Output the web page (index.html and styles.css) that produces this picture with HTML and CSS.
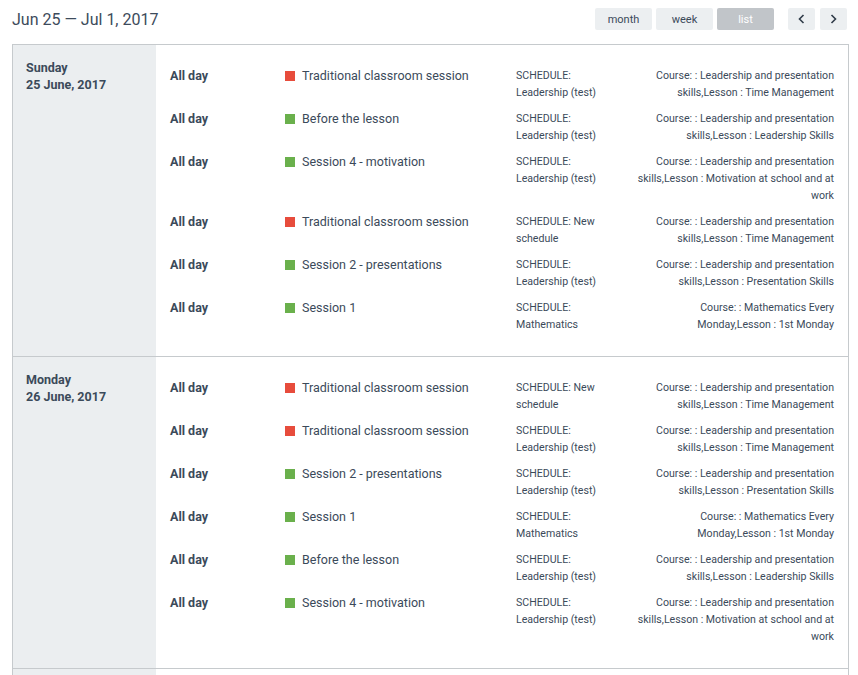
FILE: index.html
```html
<!DOCTYPE html>
<html lang="en">
<head>
    <meta charset="UTF-8">
    <title>Schedule - list</title>
    <link rel="stylesheet" href="styles.css">
</head>
<body>
    <div class="calendar">
        <div class="toolbar">
            <h2 class="range">Jun 25 — Jul 1, 2017</h2>
            <div class="views">
                <button class="view-btn">month</button>
                <button class="view-btn">week</button>
                <button class="view-btn active">list</button>
            </div>
            <div class="nav">
                <button class="nav-btn"><svg width="9" height="10" viewBox="0 0 9 10"><path d="M6.5 1 L2.5 5 L6.5 9" fill="none" stroke="#2f3b48" stroke-width="1.6"/></svg></button>
                <button class="nav-btn"><svg width="9" height="10" viewBox="0 0 9 10"><path d="M2.5 1 L6.5 5 L2.5 9" fill="none" stroke="#2f3b48" stroke-width="1.6"/></svg></button>
            </div>
        </div>

        <div class="list">
            <div class="day">
                <div class="day-label">Sunday<br>25 June, 2017</div>
                <div class="events">
                    <div class="event">
                        <div class="time">All day</div>
                        <div class="title"><span class="dot red"></span>Traditional classroom session</div>
                        <div class="schedule">SCHEDULE: Leadership (test)</div>
                        <div class="course">Course: : Leadership and presentation skills,Lesson : Time Management</div>
                    </div>
                    <div class="event">
                        <div class="time">All day</div>
                        <div class="title"><span class="dot green"></span>Before the lesson</div>
                        <div class="schedule">SCHEDULE: Leadership (test)</div>
                        <div class="course">Course: : Leadership and presentation skills,Lesson : Leadership Skills</div>
                    </div>
                    <div class="event">
                        <div class="time">All day</div>
                        <div class="title"><span class="dot green"></span>Session 4 - motivation</div>
                        <div class="schedule">SCHEDULE: Leadership (test)</div>
                        <div class="course">Course: : Leadership and presentation skills,Lesson : Motivation at school and at work</div>
                    </div>
                    <div class="event">
                        <div class="time">All day</div>
                        <div class="title"><span class="dot red"></span>Traditional classroom session</div>
                        <div class="schedule">SCHEDULE: New schedule</div>
                        <div class="course">Course: : Leadership and presentation skills,Lesson : Time Management</div>
                    </div>
                    <div class="event">
                        <div class="time">All day</div>
                        <div class="title"><span class="dot green"></span>Session 2 - presentations</div>
                        <div class="schedule">SCHEDULE: Leadership (test)</div>
                        <div class="course">Course: : Leadership and presentation skills,Lesson : Presentation Skills</div>
                    </div>
                    <div class="event">
                        <div class="time">All day</div>
                        <div class="title"><span class="dot green"></span>Session 1</div>
                        <div class="schedule">SCHEDULE: Mathematics</div>
                        <div class="course">Course: : Mathematics Every Monday,Lesson : 1st Monday</div>
                    </div>
                </div>
            </div>

            <div class="day">
                <div class="day-label">Monday<br>26 June, 2017</div>
                <div class="events">
                    <div class="event">
                        <div class="time">All day</div>
                        <div class="title"><span class="dot red"></span>Traditional classroom session</div>
                        <div class="schedule">SCHEDULE: New schedule</div>
                        <div class="course">Course: : Leadership and presentation skills,Lesson : Time Management</div>
                    </div>
                    <div class="event">
                        <div class="time">All day</div>
                        <div class="title"><span class="dot red"></span>Traditional classroom session</div>
                        <div class="schedule">SCHEDULE: Leadership (test)</div>
                        <div class="course">Course: : Leadership and presentation skills,Lesson : Time Management</div>
                    </div>
                    <div class="event">
                        <div class="time">All day</div>
                        <div class="title"><span class="dot green"></span>Session 2 - presentations</div>
                        <div class="schedule">SCHEDULE: Leadership (test)</div>
                        <div class="course">Course: : Leadership and presentation skills,Lesson : Presentation Skills</div>
                    </div>
                    <div class="event">
                        <div class="time">All day</div>
                        <div class="title"><span class="dot green"></span>Session 1</div>
                        <div class="schedule">SCHEDULE: Mathematics</div>
                        <div class="course">Course: : Mathematics Every Monday,Lesson : 1st Monday</div>
                    </div>
                    <div class="event">
                        <div class="time">All day</div>
                        <div class="title"><span class="dot green"></span>Before the lesson</div>
                        <div class="schedule">SCHEDULE: Leadership (test)</div>
                        <div class="course">Course: : Leadership and presentation skills,Lesson : Leadership Skills</div>
                    </div>
                    <div class="event">
                        <div class="time">All day</div>
                        <div class="title"><span class="dot green"></span>Session 4 - motivation</div>
                        <div class="schedule">SCHEDULE: Leadership (test)</div>
                        <div class="course">Course: : Leadership and presentation skills,Lesson : Motivation at school and at work</div>
                    </div>
                </div>
            </div>

            <div class="day">
                <div class="day-label"></div>
                <div class="events"></div>
            </div>
        </div>
    </div>
</body>
</html>
```

FILE: styles.css
```css
* {
    margin: 0;
    padding: 0;
    box-sizing: border-box;
}

html, body {
    height: 675px;
    overflow: hidden;
}

body {
    font-family: Roboto, "Liberation Sans", Arial, sans-serif;
    color: #3b4a5a;
    background: #fff;
    padding: 8px 10px 0 12px;
}

.toolbar {
    display: flex;
    align-items: center;
    height: 22px;
    margin-bottom: 14px;
}

.range {
    flex: 1;
    font-size: 16px;
    font-weight: 400;
    color: #3d4b5b;
    line-height: 22px;
    padding-top: 1px;
}

.views {
    display: flex;
    gap: 4px;
}

.view-btn,
.nav-btn {
    border: none;
    background: #eceff1;
    color: #3b4a5a;
    font-family: inherit;
    font-size: 11px;
    height: 22px;
    border-radius: 2px;
}

.view-btn {
    width: 57px;
}

.view-btn.active {
    background: #c1c5c9;
    color: #fff;
}

.nav {
    display: flex;
    gap: 5px;
    margin-left: 14px;
    margin-right: 1px;
}

.nav-btn {
    width: 27px;
    display: flex;
    align-items: center;
    justify-content: center;
}

.list {
    border: 1px solid #c6cacd;
    border-bottom: none;
    width: 837px;
}

.day {
    display: flex;
    border-bottom: 1px solid #c6cacd;
}

.day:last-child {
    min-height: 120px;
}

.day-label {
    width: 143px;
    flex-shrink: 0;
    background: #ebeef0;
    padding: 14px 13px 14px;
    font-size: 12.5px;
    font-weight: 700;
    line-height: 17px;
}

.events {
    flex: 1;
    padding: 22px 14px 14px 14px;
}

.event {
    display: grid;
    grid-template-columns: 115px 231px 95px 1fr;
    line-height: 17px;
    margin-bottom: 9px;
}

.time {
    font-size: 12.5px;
    font-weight: 700;
}

.title {
    font-size: 12.5px;
    display: flex;
    align-items: flex-start;
}

.dot {
    width: 10px;
    height: 10px;
    margin: 4px 7px 0 0;
    flex-shrink: 0;
}

.dot.red {
    background: #e74c3c;
}

.dot.green {
    background: #6ab04c;
}

.schedule,
.course {
    font-size: 10.6px;
}

.course {
    text-align: right;
    padding-left: 18px;
}
```
